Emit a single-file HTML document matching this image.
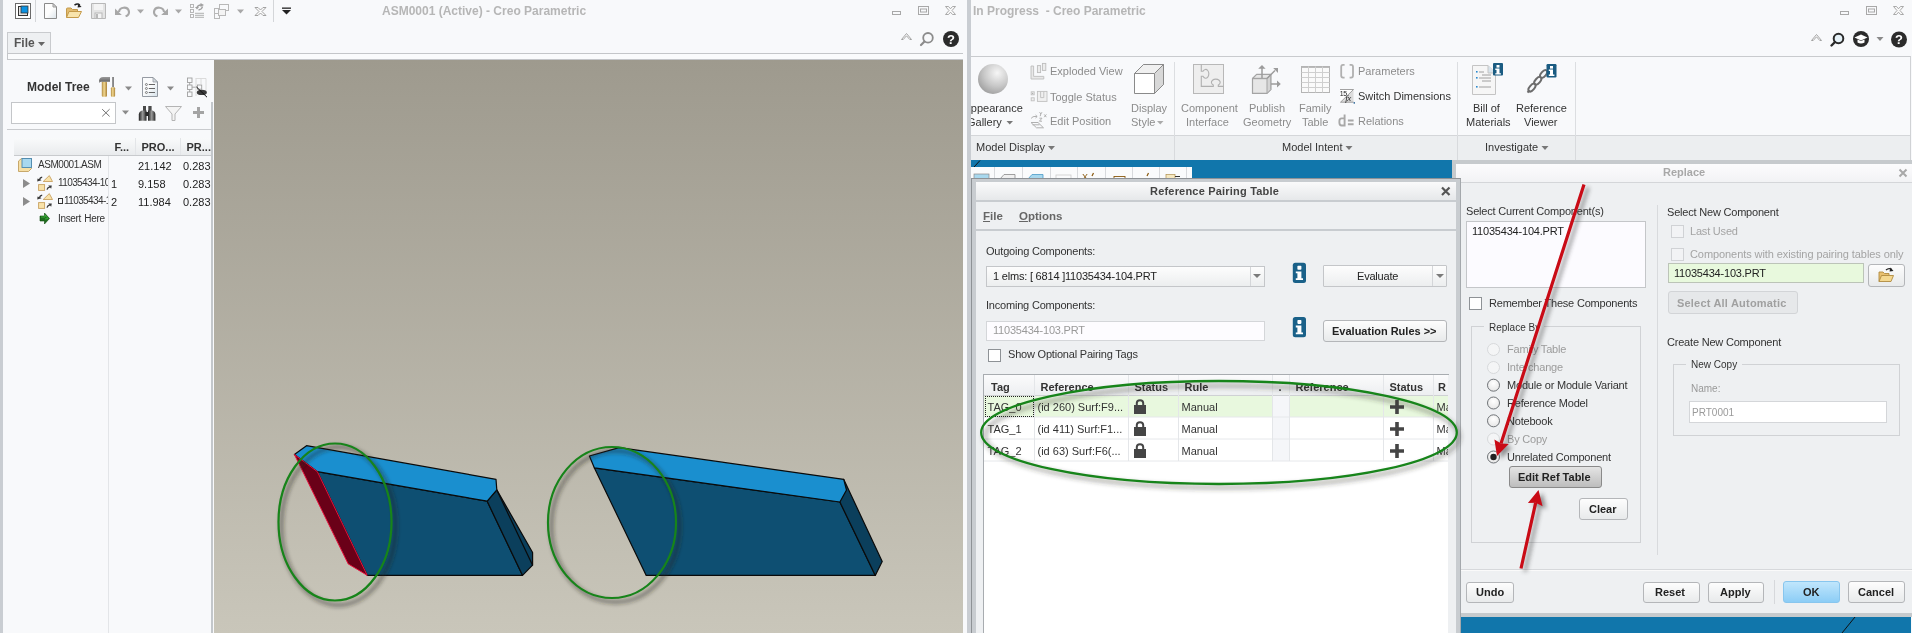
<!DOCTYPE html>
<html><head><meta charset="utf-8">
<style>
*{margin:0;padding:0;box-sizing:border-box}
html,body{width:1912px;height:633px;overflow:hidden;background:#f8f9fb;font-family:"Liberation Sans",sans-serif;position:relative}
.a{position:absolute}
svg.a{will-change:transform}
.t{position:absolute;white-space:nowrap;line-height:1;will-change:transform}
</style></head><body>

<!-- LEFT WINDOW -->
<div class="a" style="left:0;top:0;width:3px;height:633px;background:#c9cdd2"></div>
<div class="a" style="left:3px;top:0;width:964px;height:633px;background:#f8f9fb"></div>


<svg class="a" style="left:0;top:0" width="967" height="60" viewBox="0 0 967 60">
 <!-- app icon -->
 <rect x="15.5" y="3.5" width="15" height="15" fill="#fff" stroke="#6a6a6a"/>
 <rect x="18.5" y="6.5" width="9" height="9" fill="#e4e4e4" stroke="#333"/>
 <rect x="21" y="6" width="7" height="7" fill="#0c92e2" stroke="#333" stroke-width="0.8"/>
 <line x1="35.5" y1="0" x2="35.5" y2="22" stroke="#d4d6d9"/>
 <!-- new -->
 <defs><linearGradient id="nd" x1="0" y1="0" x2="1" y2="1"><stop offset="0.5" stop-color="#fdfdfd"/><stop offset="1" stop-color="#dce4ea"/></linearGradient></defs>
 <path d="M44.5 3.5 H53 L56.5 7 V18.5 H44.5 Z" fill="url(#nd)" stroke="#8a8a8a"/>
 <path d="M53 3.5 V7 H56.5 Z" fill="#d8d8d8" stroke="#9a9a9a" stroke-linejoin="round"/>
 <!-- open -->
 <path d="M66.5 17.5 V9 Q66.5 8 67.5 8 H71 L72.5 9.5 H77.5 V11.5" fill="#e2bc70" stroke="#c49a4a"/>
 <path d="M66.5 17.5 L69 11.5 H81.5 L78.5 17.5 Z" fill="#f8e4ac" stroke="#c49a4a"/>
 <path d="M74.5 5.2 Q77.5 3 79.8 5" fill="none" stroke="#222" stroke-width="1.6"/>
 <path d="M78.2 3.6 L81.6 7 L77.6 7.4 Z" fill="#222"/>
 <!-- save -->
 <path d="M91.5 3.5 H105.5 V18.5 H91.5 Z" fill="#e4e4e4" stroke="#b8b8b8"/>
 <rect x="94" y="4" width="9" height="6" fill="#f4f4f4"/>
 <rect x="95" y="13" width="7" height="5.5" fill="#f4f4f4" stroke="#b8b8b8"/>
 <rect x="96" y="14" width="2" height="4" fill="#b8b8b8"/>
 <!-- undo -->
 <path d="M119 12 A5 4.4 0 1 1 125.6 16.3" fill="none" stroke="#a8a8a8" stroke-width="2.2"/>
 <path d="M115 8.4 V15 H121.8 Z" fill="#a8a8a8"/>
 <path d="M137 9.5 H144 L140.5 13.5 Z" fill="#a8a8a8"/>
 <!-- redo -->
 <path d="M164 12 A5 4.4 0 1 0 157.4 16.3" fill="none" stroke="#a8a8a8" stroke-width="2.2"/>
 <path d="M168 8.4 V15 H161.2 Z" fill="#a8a8a8"/>
 <path d="M175 9.5 H182 L178.5 13.5 Z" fill="#a8a8a8"/>
 <!-- regen -->
 <g fill="none" stroke="#b0b0b0" stroke-width="0.9">
  <rect x="190.5" y="4.5" width="3" height="3"/><rect x="190.5" y="9.5" width="3" height="3"/><rect x="190.5" y="14.5" width="3" height="3"/>
 </g>
 <path d="M195 13.3 H204 M195 15.3 H204 M195 17.3 H204" stroke="#a8a8a8" stroke-width="0.9"/>
 <path d="M197 8 Q197.5 5 201 5" fill="none" stroke="#a0a0a0" stroke-width="1.4"/>
 <path d="M202.5 6.5 Q202 9.5 198.5 10" fill="none" stroke="#a0a0a0" stroke-width="1.4"/>
 <path d="M200.5 3 L204 5 L200.5 7 Z M195 7 L199 7 L197 9.5 Z" fill="#a0a0a0"/>
 <!-- windows -->
 <g fill="none" stroke="#b8b8b8">
  <rect x="214.5" y="8.5" width="5" height="5"/><rect x="214.5" y="13.5" width="5" height="5"/>
  <rect x="219.5" y="4.5" width="9" height="6"/><rect x="218.5" y="9.5" width="7" height="6" fill="#f4f4f4"/>
 </g>
 <path d="M237 9.5 H244 L240.5 13.5 Z" fill="#a8a8a8"/>
 <!-- close -->
 <path d="M255 7.5 L258 7.5 L260.5 10 L263 7.5 L266 7.5 L262 11.5 L266 15.5 L263 15.5 L260.5 13 L258 15.5 L255 15.5 L259 11.5 Z" fill="#fafafa" stroke="#9a9a9a" stroke-width="0.9"/>
 <line x1="273.5" y1="0" x2="273.5" y2="22" stroke="#d4d6d9"/>
 <rect x="282" y="7.5" width="9" height="1.3" fill="#222"/>
 <path d="M282 10 H291 L286.5 14.5 Z" fill="#222"/>
 <!-- window controls -->
 <rect x="892.5" y="11.5" width="8" height="3" fill="none" stroke="#a8a8a8"/>
 <rect x="918.5" y="6.5" width="10" height="8" fill="none" stroke="#a8a8a8"/>
 <rect x="920.5" y="9" width="6" height="3" fill="none" stroke="#a8a8a8"/>
 <path d="M945.5 6.5 L948.5 6.5 L950.5 8.8 L952.5 6.5 L955.5 6.5 L952 10.5 L955.5 14.5 L952.5 14.5 L950.5 12.2 L948.5 14.5 L945.5 14.5 L949 10.5 Z" fill="#fafafa" stroke="#a0a0a0" stroke-width="0.9"/>
 <!-- ribbon right icons -->
 <path d="M901.5 39.5 L906.5 33.5 L911.5 39.5 L909.8 39.5 L906.5 35.8 L903.2 39.5 Z" fill="#fff" stroke="#9a9a9a" stroke-width="0.9"/>
 <circle cx="928" cy="37.8" r="4.8" fill="none" stroke="#8c8c8c" stroke-width="1.8"/>
 <line x1="924.5" y1="41.5" x2="921" y2="45" stroke="#8c8c8c" stroke-width="2.2" stroke-linecap="round"/>
 <circle cx="951" cy="39" r="8" fill="#2b2b2b"/>
 <text x="951" y="43.5" font-family="Liberation Sans" font-weight="bold" font-size="13" fill="#fff" text-anchor="middle">?</text>
</svg>

<!-- title -->
<div class="t" style="left:382px;top:5px;font-size:12px;font-weight:bold;color:#b6b6b6">ASM0001 (Active) - Creo Parametric</div>

<!-- file tab / collapsed ribbon -->
<div class="a" style="left:7px;top:32px;width:44px;height:22px;background:#eef0f2;border:1px solid #c9cbce;border-bottom:none"></div>
<div class="t" style="left:14px;top:37px;font-size:12px;font-weight:bold;color:#555">File</div>
<svg class="a" style="left:38px;top:42px" width="8" height="5"><path d="M0 0 H7 L3.5 4 Z" fill="#666"/></svg>
<div class="a" style="left:7px;top:53px;width:960px;height:7px;border:1px solid #c4c6c9;border-right:none;background:#fafbfc"></div>

<!-- model tree panel -->
<div class="a" style="left:108px;top:138px;width:1px;height:495px;background:#e3e5e8"></div>
<div class="a" style="left:211px;top:102px;width:2px;height:531px;background:#c3c7cb"></div>
<div class="t" style="left:27px;top:81px;font-size:12px;font-weight:bold;color:#333">Model Tree</div>

<svg class="a" style="left:0;top:60" width="214" height="180" viewBox="0 60 214 180">
 <!-- hammer/screwdriver -->
 <defs>
  <linearGradient id="wd" x1="0" y1="0" x2="1" y2="0"><stop offset="0" stop-color="#b08a40"/><stop offset="0.45" stop-color="#f2d890"/><stop offset="1" stop-color="#a88038"/></linearGradient>
  <linearGradient id="mt" x1="0" y1="0" x2="0" y2="1"><stop offset="0" stop-color="#9a9a9a"/><stop offset="1" stop-color="#5a5a5a"/></linearGradient>
 </defs>
 <rect x="101.8" y="81.5" width="5.2" height="15.2" rx="1" fill="url(#wd)"/>
 <path d="M99 80.5 Q99.5 77 103 77 H110 V81.8 H101 Q100 81.8 99.5 83 Z" fill="url(#mt)"/>
 <rect x="112.3" y="77" width="1.5" height="10.5" fill="#6a6a6a"/>
 <rect x="110.9" y="87.2" width="4.2" height="9.5" rx="1" fill="url(#wd)"/>
 <path d="M125 86.5 H132 L128.5 90.5 Z" fill="#8a8a8a"/>
 <!-- doc list -->
 <defs><linearGradient id="dl" x1="0" y1="0" x2="1" y2="1"><stop offset="0.5" stop-color="#fafbfc"/><stop offset="1" stop-color="#d6e2ea"/></linearGradient></defs>
 <path d="M142.5 77.5 H153 L157.5 82 V96.5 H142.5 Z" fill="url(#dl)" stroke="#8a9098" stroke-width="0.9"/>
 <path d="M153 77.5 V82 H157.5 Z" fill="#d8dde2" stroke="#8a9098" stroke-width="0.7"/>
 <g fill="none" stroke="#555" stroke-width="0.7"><circle cx="146.4" cy="84.5" r="1"/><circle cx="146.4" cy="88.5" r="1"/><circle cx="146.4" cy="92.5" r="1"/></g>
 <path d="M148.8 84.5 H155 M148.8 88.5 H155 M148.8 92.5 H155" stroke="#555" stroke-width="0.9"/>
 <path d="M167 86.5 H174 L170.5 90.5 Z" fill="#8a8a8a"/>
 <!-- tree show icon -->
 <g fill="none" stroke="#a0a0a0" stroke-width="0.9">
  <rect x="187.5" y="78" width="4.5" height="4.5"/><rect x="187.5" y="85" width="4.5" height="4.5"/><rect x="187.5" y="92" width="4.5" height="4.5"/>
  <path d="M189.7 82.5 V85 M189.7 89.5 V92 M192 87.2 H197.5"/><rect x="197.5" y="85" width="4.2" height="4.2"/>
 </g>
 <path d="M195.5 78.5 H206 M196 78.5 V96 M201 78.5 V85 M206 78.5 V92" stroke="#d8d8d8" stroke-width="0.9" fill="none"/>
 <ellipse cx="201.8" cy="92.4" rx="5" ry="2.7" fill="#3a3a3a"/>
 <line x1="196.5" y1="87" x2="207" y2="97.2" stroke="#111" stroke-width="1"/>
 <!-- search box -->
 <rect x="11.5" y="102.5" width="104" height="21" fill="#fff" stroke="#c4c6c9"/>
 <path d="M102.2 109.2 L109.6 116.4 M109.6 109.2 L102.2 116.4" stroke="#707070" stroke-width="1"/>
 <path d="M122 110.5 H129 L125.5 114.5 Z" fill="#8a8a8a"/>
 <!-- binoculars -->
 <defs><linearGradient id="bn" x1="0" y1="0" x2="1" y2="0"><stop offset="0" stop-color="#1e1e1e"/><stop offset="0.5" stop-color="#9a9a9a"/><stop offset="1" stop-color="#262626"/></linearGradient></defs>
 <rect x="143" y="106" width="3" height="5" fill="#4a4a4a"/><rect x="148.3" y="106" width="3.3" height="5" fill="#4a4a4a"/>
 <path d="M142 110.5 H146.5 V120.7 H138.8 V114.5 Q139 111.5 142 110.5 Z" fill="url(#bn)"/>
 <path d="M148 110.5 H152.5 Q155.4 111.5 155.4 114.5 V120.7 H148 Z" fill="url(#bn)"/>
 <rect x="145.5" y="112" width="3" height="4" fill="#2a2a2a"/>
 <!-- funnel -->
 <path d="M165.5 106.5 H181.5 L175 114 V120.5 H172 V114 Z" fill="#f4f4f4" stroke="#b4b4b4"/>
 <!-- plus -->
 <path d="M197 107 H200 V111 H204 V114 H200 V118 H197 V114 H193 V111 H197 Z" fill="#a4a4a4"/>
 <line x1="7" y1="129.5" x2="211" y2="129.5" stroke="#c9cbce"/>
 <!-- header -->
 <defs><linearGradient id="hg" x1="0" y1="0" x2="0" y2="1"><stop offset="0" stop-color="#f9fafb"/><stop offset="1" stop-color="#e9ebed"/></linearGradient></defs>
 <rect x="14" y="138" width="197" height="17" fill="url(#hg)"/>
 <line x1="14" y1="155.5" x2="211" y2="155.5" stroke="#c8cacd"/>
 <path d="M135.5 138 V155 M180.5 138 V155" stroke="#e3e5e8"/>
 <text x="114.5" y="151" font-family="Liberation Sans" font-weight="bold" font-size="11" fill="#333">F...</text>
 <text x="141.5" y="151" font-family="Liberation Sans" font-weight="bold" font-size="11" fill="#333">PRO...</text>
 <text x="186.5" y="151" font-family="Liberation Sans" font-weight="bold" font-size="11" fill="#333">PR...</text>
 <!-- row1 icon -->
 <path d="M18.5 161 L21.5 158.5 H31.5 V168.5 L28.5 171.5 H18.5 Z" fill="#f6dfa6" stroke="#c2a060" stroke-width="0.9"/>
 <rect x="22" y="158.5" width="9.5" height="9" fill="#a8d8f0" stroke="#4a88b0" stroke-width="0.9"/>
 <!-- row2 -->
 <path d="M23 179 L30 183.5 L23 188 Z" fill="#8c8c8c"/>
 <path d="M23 197 L30 201.5 L23 206 Z" fill="#8c8c8c"/>
 <g id="pi">
  <path d="M43.2 181.5 L49.3 175.6 L52.5 181.5 Z" fill="#f8e2aa" stroke="#c8a262" stroke-width="0.9" stroke-linejoin="round"/>
  <rect x="38.6" y="184.6" width="6" height="5.8" fill="#f8e2aa" stroke="#c8a262" stroke-width="0.9"/>
  <path d="M42.2 177.2 Q39.8 177.6 39.6 180" fill="none" stroke="#3a3a3a" stroke-width="1.3"/>
  <path d="M37.2 181.6 L37.6 178.4 L41.6 180.2 Z" fill="#3a3a3a"/>
  <path d="M47 189.6 Q47.6 187.2 50 186.8" fill="none" stroke="#3a3a3a" stroke-width="1.3"/>
  <path d="M51.8 185.6 L48.2 185.4 L51.2 188.8 Z" fill="#3a3a3a"/>
 </g>
 <use href="#pi" y="18"/>
 <!-- insert here arrow -->
 <path d="M40 216 H44.5 V213 L49.5 218.5 L44.5 224 V221 H40 Z" fill="#1e6e1e" stroke="#0e4a0e" stroke-width="0.6"/>
 <path d="M41 217 H45 V215 L48 218.5 L45 219" fill="none" stroke="#3cbc3c" stroke-width="0.8"/>
</svg>
<div class="t" style="left:38px;top:160px;font-size:10px;color:#333;letter-spacing:-0.45px">ASM0001.ASM</div>
<div class="t" style="left:137.5px;top:161px;font-size:11px;color:#222">21.142</div>
<div class="t" style="left:182.5px;top:161px;font-size:11px;color:#222">0.283</div>
<div class="t" style="left:58px;top:178px;font-size:10px;color:#333;letter-spacing:-0.6px;width:50px;overflow:hidden">11035434-104.PRT</div>
<div class="t" style="left:110.5px;top:179px;font-size:11px;color:#222">1</div>
<div class="t" style="left:137.5px;top:179px;font-size:11px;color:#222">9.158</div>
<div class="t" style="left:182.5px;top:179px;font-size:11px;color:#222">0.283</div>
<div class="a" style="left:58px;top:197.5px;width:4.5px;height:6px;border:1.2px solid #333"></div>
<div class="t" style="left:64px;top:196px;font-size:10px;color:#333;letter-spacing:-0.6px;width:44px;overflow:hidden">11035434-103</div>
<div class="t" style="left:110.5px;top:197px;font-size:11px;color:#222">2</div>
<div class="t" style="left:137.5px;top:197px;font-size:11px;color:#222">11.984</div>
<div class="t" style="left:182.5px;top:197px;font-size:11px;color:#222">0.283</div>
<div class="t" style="left:58px;top:214px;font-size:10px;color:#333;letter-spacing:-0.35px;word-spacing:1px">Insert Here</div>


<!-- viewport -->
<div class="a" style="left:214px;top:60px;width:749px;height:573px;background:linear-gradient(#9e9a8e,#c9c6ba)"></div>


<svg class="a" style="left:214px;top:60px" width="749" height="573" viewBox="214 60 749 573">
 <defs>
  <filter id="sh" x="-20%" y="-20%" width="140%" height="140%"><feGaussianBlur stdDeviation="2.2"/></filter>
 </defs>
 <!-- shape 1 -->
 <g stroke="#0a0a0a" stroke-width="1.2" stroke-linejoin="round">
  <path d="M317.4 471.7 L487.2 501.2 L522.5 575.3 L367.2 575.3 Z" fill="#0e4f72"/>
  <path d="M487.2 501.2 L496.8 489.9 L532.6 552.5 L532.6 565.2 L522.5 575.3 Z" fill="#0b3f5c"/>
  <path d="M496.8 489.9 L532.6 565.2" fill="none"/>
  <path d="M306.5 445.7 L496 479.3 L496.8 489.9 L487.2 501.2 L317.4 471.7 L294.4 454.5 Z" fill="#1a8fcf"/>
 </g>
 <path d="M294.4 454.5 L317.4 471.7 L367.2 575.3 L348.2 563.9 Z" fill="#6a0018" stroke="#e8103c" stroke-width="1"/>
 <!-- shape 2 -->
 <g stroke="#0a0a0a" stroke-width="1.2" stroke-linejoin="round">
  <path d="M594.4 467.9 L839.9 502 L875.3 575.4 L646.2 575.4 Z" fill="#0e4f72"/>
  <path d="M839.9 502 L843.7 479.3 L882.2 561.5 L875.3 575.4 Z" fill="#0b3f5c"/>
  <path d="M589.4 456 L619.2 447.7 L843.7 479.3 L846.5 490 L839.9 502 L594.4 467.9 Z" fill="#1a8fcf"/>
 </g>
 <!-- ellipses with shadows -->
 <g fill="none" stroke-width="2.2">
  <ellipse cx="338.5" cy="526" rx="57" ry="79" stroke="rgba(40,38,30,0.6)" stroke-width="3" filter="url(#sh)"/>
  <ellipse cx="615.5" cy="526.5" rx="64" ry="75.5" stroke="rgba(40,38,30,0.6)" stroke-width="3" filter="url(#sh)"/>
  <ellipse cx="335" cy="522" rx="56.5" ry="78.5" stroke="#17841a"/>
  <ellipse cx="612" cy="522.5" rx="64" ry="75.5" stroke="#17841a"/>
 </g>
</svg>

<!-- window separator -->
<div class="a" style="left:963px;top:0;width:4px;height:633px;background:#f8f9fb"></div>
<div class="a" style="left:967px;top:0;width:4px;height:633px;background:#c9cdd2"></div>

<!-- RIGHT WINDOW -->
<div class="a" style="left:971px;top:0;width:941px;height:633px;background:#f8f9fb"></div>
<div class="t" style="left:973px;top:5px;font-size:12px;font-weight:bold;color:#b6b6b6">In Progress&nbsp; - Creo Parametric</div>


<!-- right window top icons -->
<svg class="a" style="left:1800px;top:0" width="112" height="56" viewBox="1800 0 112 56">
 <rect x="1840.5" y="11.5" width="8" height="3" fill="none" stroke="#a8a8a8"/>
 <rect x="1866.5" y="6.5" width="10" height="8" fill="none" stroke="#a8a8a8"/>
 <rect x="1868.5" y="9" width="6" height="3" fill="none" stroke="#a8a8a8"/>
 <path d="M1893.5 6.5 L1896.5 6.5 L1898.5 8.8 L1900.5 6.5 L1903.5 6.5 L1900 10.5 L1903.5 14.5 L1900.5 14.5 L1898.5 12.2 L1896.5 14.5 L1893.5 14.5 L1897 10.5 Z" fill="#fafafa" stroke="#a0a0a0" stroke-width="0.9"/>
 <path d="M1811.5 40.5 L1816.5 34.5 L1821.5 40.5 L1819.8 40.5 L1816.5 36.8 L1813.2 40.5 Z" fill="#fff" stroke="#9a9a9a" stroke-width="0.9"/>
 <circle cx="1838.5" cy="38.5" r="4.8" fill="#e6f2f8" stroke="#2a2a2a" stroke-width="2"/>
 <line x1="1835" y1="42" x2="1831.5" y2="45.5" stroke="#2a2a2a" stroke-width="2.4" stroke-linecap="round"/>
 <circle cx="1861" cy="39" r="8" fill="#2b2b2b"/>
 <path d="M1854.5 37.5 L1861 34.5 L1867.5 37.5 L1861 40.5 Z" fill="#fff"/>
 <path d="M1857.5 39.5 V42.5 Q1861 44.5 1864.5 42.5 V39.5 L1861 41 Z" fill="#fff"/>
 <path d="M1876.5 37 H1883.5 L1880 41 Z" fill="#8a8a8a"/>
 <circle cx="1899" cy="39.5" r="8" fill="#2b2b2b"/>
 <text x="1899" y="44" font-family="Liberation Sans" font-weight="bold" font-size="13" fill="#fff" text-anchor="middle">?</text>
</svg>

<!-- ribbon -->
<div class="a" style="left:971px;top:56px;width:940px;height:105px;border-top:1px solid #c9cbce;border-right:1px solid #d0d2d5;background:#f8f9fb"></div>
<div class="a" style="left:971px;top:135px;width:939px;height:25px;background:#eceef0;border-top:1px solid #d4d6d9"></div>
<div class="a" style="left:1174px;top:62px;width:1px;height:98px;background:#dcdee1"></div>
<div class="a" style="left:1457px;top:62px;width:1px;height:98px;background:#dcdee1"></div>
<div class="a" style="left:1575px;top:62px;width:1px;height:98px;background:#dcdee1"></div>

<svg class="a" style="left:971px;top:56px" width="940" height="104" viewBox="971 56 940 104">
 <defs>
  <radialGradient id="sph" cx="0.64" cy="0.3" r="0.8"><stop offset="0" stop-color="#f6f6f6"/><stop offset="0.55" stop-color="#c8c8c8"/><stop offset="1" stop-color="#9a9a9a"/></radialGradient>
 </defs>
 <circle cx="993" cy="79" r="15" fill="url(#sph)"/>
 <path d="M1006.5 121 H1013 L1009.75 124.5 Z" fill="#777"/>
 <!-- exploded view icon -->
 <path d="M1031 66 V79 H1043.8 V76.4 H1033.6 V66 Z" fill="#e8e8e8" stroke="#bdbdbd" stroke-width="0.9"/>
 <rect x="1037.4" y="65.6" width="3.2" height="7" fill="#ececec" stroke="#bdbdbd" stroke-width="0.9"/>
 <rect x="1042.4" y="63.4" width="3.4" height="7" fill="#ececec" stroke="#bdbdbd" stroke-width="0.9"/>
 <!-- toggle status -->
 <g fill="#f0f0f0" stroke="#c0c0c0" stroke-width="0.9">
  <rect x="1031.2" y="91.8" width="3" height="3"/><rect x="1031.2" y="97.8" width="3" height="3"/>
  <rect x="1037.4" y="91.4" width="9.6" height="10"/>
 </g>
 <path d="M1040.6 91.6 V97.6 H1043.8 V91.6" fill="none" stroke="#c0c0c0" stroke-width="0.9"/>
 <circle cx="1032.7" cy="93.3" r="0.6" fill="#999"/>
 <!-- edit position -->
 <g fill="none" stroke="#b0b0b0" stroke-width="1">
  <path d="M1031.5 118.5 Q1032 116.5 1034 116.5 H1037 M1035.5 115 L1037.2 116.5 L1035.5 118"/>
  <path d="M1031 122.5 H1038 L1043.5 127.8 H1036.5 Z M1032.5 124.8 H1039.5"/>
  <path d="M1039.6 112.2 L1040.8 114 L1042 112.2 M1040.8 114 L1040.2 116.2"/>
  <path d="M1044.2 114.4 L1046.4 117.2 M1046.4 114.4 L1044.2 117.2"/>
  <path d="M1039.4 118.2 H1042 L1039.4 121.2 H1042"/>
 </g>
 <!-- display style cube -->
 <path d="M1134.5 73.5 L1143.5 64.5 H1163.5 V84.5 L1154.5 93.5 H1134.5 Z" fill="#fff" stroke="#8a8a8a"/>
 <path d="M1134.5 73.5 L1143.5 64.5 H1163.5 L1154.5 73.5 Z" fill="#f0f0f0" stroke="#8a8a8a"/>
 <path d="M1154.5 73.5 L1163.5 64.5 V84.5 L1154.5 93.5 Z" fill="#d8d8d8" stroke="#8a8a8a"/>
 <path d="M1157 121 H1163.5 L1160.25 124.5 Z" fill="#aaa"/>
 <!-- component interface puzzle -->
 <rect x="1193.5" y="64.5" width="30" height="29" fill="#eeeeee" stroke="#b8b8b8" stroke-width="1"/>
 <path d="M1201.3 64.5 V71.3 H1203 A3.2 4.4 0 1 1 1203 76.3 H1201.3 V86.4 H1213.3 V85 A4.4 3.2 0 1 1 1218.3 85 V86.4 H1223.5" fill="none" stroke="#b0b0b0" stroke-width="1.1"/>
 <!-- publish geometry -->
 <path d="M1252.5 78.5 L1256.6 74.4 H1270.8 V89.6 L1267 93.4 H1252.5 Z" fill="#e6e6e6" stroke="#a4a4a4" stroke-width="1.2" stroke-linejoin="round"/>
 <path d="M1267 78.5 L1270.8 74.4 V89.6 L1267 93.4 Z" fill="#d4d4d4" stroke="#a4a4a4" stroke-width="1"/>
 <path d="M1252.5 78.5 H1267" stroke="#a4a4a4" stroke-width="1.4"/>
 <g stroke="#9c9c9c" stroke-width="1.5" fill="none"><path d="M1262 78 V68 M1267 78.5 L1275 70.5 M1271 84 H1277.5"/></g>
 <path d="M1258.2 68.8 L1262 65 L1265.6 68.8 Z M1273.2 68 L1278 68 L1278 73 Z M1277 80.4 L1280.8 84 L1277 87.6 Z" fill="#9c9c9c"/>
 <!-- family table -->
 <rect x="1301.5" y="66.5" width="28" height="26" fill="#fafafa" stroke="#b4b4b4"/>
 <path d="M1301.5 67.2 H1329.5" stroke="#b4b4b4" stroke-width="1.4"/>
 <path d="M1301.5 72.5 H1329.5 M1301.5 77.5 H1329.5 M1301.5 82.5 H1329.5 M1301.5 87.5 H1329.5 M1308.5 66.5 V92.5 M1315.5 66.5 V92.5 M1322.5 66.5 V92.5" stroke="#cfcfcf"/>
 <!-- parameters -->
 <path d="M1344.6 64.8 H1343 Q1341.2 64.8 1341.2 66.8 V75.6 Q1341.2 77.6 1343 77.6 H1344.6 M1349.6 64.8 H1351.2 Q1353 64.8 1353 66.8 V75.6 Q1353 77.6 1351.2 77.6 H1349.6" fill="none" stroke="#b0b0b0" stroke-width="1.8"/>
 <!-- switch dimensions -->
 <path d="M1340 89.5 H1353.5 L1340.5 102 Z" fill="#fff"/>
 <path d="M1353.5 89.5 V102.2 H1340.5 Z" fill="#dcdcdc"/>
 <path d="M1340 89.5 H1353.5 L1340.5 102.2 H1353.5" fill="none" stroke="#8a8a8a" stroke-width="0.8"/>
 <text x="1339.8" y="96" font-family="Liberation Sans" font-size="7" fill="#222" letter-spacing="-0.5">15</text>
 <text x="1345.2" y="101.2" font-family="Liberation Serif" font-style="italic" font-size="9" fill="#222" letter-spacing="-0.5">fx</text>
 <rect x="1353.6" y="102.2" width="1.4" height="1.4" fill="#1a5a90"/>
 <!-- relations -->
 <path d="M1344.6 114.4 V125.5 H1341.6 Q1339.4 125.5 1339.4 122.8 V121 Q1339.4 118.4 1341.6 118.4 H1344.6" fill="none" stroke="#a8a8a8" stroke-width="1.9"/>
 <path d="M1347.9 120.5 H1353.6 M1347.9 124.2 H1353.6" stroke="#a8a8a8" stroke-width="1.9"/>
 <!-- BOM -->
 <path d="M1472.5 65.5 H1488 L1495.5 73 V94.5 H1472.5 Z" fill="#f6f6f6" stroke="#c4c4c4"/>
 <path d="M1488 65.5 V73 H1495.5" fill="#d8e4ec" stroke="#c4c4c4"/>
 <rect x="1476" y="71" width="1.6" height="1.6" fill="#2a8ad0"/><rect x="1476" y="77" width="1.6" height="1.6" fill="#2a8ad0"/><rect x="1476" y="86" width="1.6" height="1.6" fill="#2a8ad0"/>
 <path d="M1479 72 H1484 M1482 75 H1491 M1479 78 H1491 M1482 81 H1491 M1479 87 H1491" stroke="#8a8a8a" stroke-width="0.8"/>
 <rect x="1493" y="63" width="10" height="12.5" rx="1" fill="#1b5c82"/>
 <rect x="1496.5" y="65" width="3" height="2.6" fill="#fff"/><path d="M1495.3 68.6 H1499.5 V73.2 H1500.9 V74.6 H1495.3 V73.2 H1496.5 V69.9 H1495.3 Z" fill="#fff"/>
 <!-- chain -->
 <g fill="none" stroke="#6c6c6c" stroke-width="2">
  <path d="M1527.5 92.5 L1529.5 90.5"/>
  <ellipse cx="1532" cy="87.6" rx="4.6" ry="2.4" transform="rotate(-50 1532 87.6)"/>
  <ellipse cx="1537.8" cy="80.8" rx="4.6" ry="2.4" transform="rotate(-50 1537.8 80.8)"/>
  <ellipse cx="1543.6" cy="74" rx="4.6" ry="2.4" transform="rotate(-50 1543.6 74)"/>
 </g>
 <rect x="1546.5" y="64" width="10" height="13.5" rx="1.2" fill="#1b5c82"/>
 <rect x="1550" y="66" width="3" height="2.6" fill="#fff"/><path d="M1548.8 69.6 H1553 V74.6 H1554.4 V76 H1548.8 V74.6 H1550 V70.9 H1548.8 Z" fill="#fff"/>
 <!-- label dropdowns -->
 <path d="M1048 146 H1055 L1051.5 150 Z" fill="#777"/>
 <path d="M1345.5 146 H1352.5 L1349 150 Z" fill="#777"/>
 <path d="M1541.5 146 H1548.5 L1545 150 Z" fill="#777"/>
</svg>
<div class="a" style="left:1174px;top:136px;width:1px;height:24px;background:#d8dadd"></div>
<div class="a" style="left:1457px;top:136px;width:1px;height:24px;background:#d8dadd"></div>
<div class="a" style="left:1575px;top:136px;width:1px;height:24px;background:#d8dadd"></div>

<div class="t" style="left:971px;top:103px;width:60px;overflow:hidden;font-size:11px;color:#333"><span style="margin-left:-7.5px">Appearance</span></div>
<div class="t" style="left:971px;top:117px;width:60px;overflow:hidden;font-size:11px;color:#333"><span style="margin-left:-4px">Gallery</span></div>
<div class="t" style="left:1050px;top:66px;font-size:11px;color:#8c8c8c">Exploded View</div>
<div class="t" style="left:1050px;top:92px;font-size:11px;color:#8c8c8c">Toggle Status</div>
<div class="t" style="left:1050px;top:116px;font-size:11px;color:#8c8c8c">Edit Position</div>
<div class="t" style="left:1131px;top:103px;font-size:11px;color:#8c8c8c">Display</div>
<div class="t" style="left:1131px;top:117px;font-size:11px;color:#8c8c8c">Style</div>
<div class="t" style="left:1181px;top:103px;font-size:11px;color:#8c8c8c">Component</div>
<div class="t" style="left:1186px;top:117px;font-size:11px;color:#8c8c8c">Interface</div>
<div class="t" style="left:1249px;top:103px;font-size:11px;color:#8c8c8c">Publish</div>
<div class="t" style="left:1243px;top:117px;font-size:11px;color:#8c8c8c">Geometry</div>
<div class="t" style="left:1299px;top:103px;font-size:11px;color:#8c8c8c">Family</div>
<div class="t" style="left:1302px;top:117px;font-size:11px;color:#8c8c8c">Table</div>
<div class="t" style="left:1358px;top:66px;font-size:11px;color:#8c8c8c">Parameters</div>
<div class="t" style="left:1358px;top:91px;font-size:11px;color:#333">Switch Dimensions</div>
<div class="t" style="left:1358px;top:116px;font-size:11px;color:#8c8c8c">Relations</div>
<div class="t" style="left:1473px;top:103px;font-size:11px;color:#333">Bill of</div>
<div class="t" style="left:1466px;top:117px;font-size:11px;color:#333">Materials</div>
<div class="t" style="left:1516px;top:103px;font-size:11px;color:#333">Reference</div>
<div class="t" style="left:1524px;top:117px;font-size:11px;color:#333">Viewer</div>
<div class="t" style="left:976px;top:142px;font-size:11px;color:#333">Model Display</div>
<div class="t" style="left:1282px;top:142px;font-size:11px;color:#333">Model Intent</div>
<div class="t" style="left:1485px;top:142px;font-size:11px;color:#333">Investigate</div>

<!-- blue band -->
<div class="a" style="left:971px;top:160px;width:940px;height:473px;background:#1176ab"></div>
<div class="a" style="left:1911px;top:160px;width:1px;height:473px;background:#f8f9fb"></div>
<svg class="a" style="left:971px;top:160px" width="230" height="20" viewBox="971 160 230 20">
 <line x1="974" y1="167" x2="980" y2="160.5" stroke="#111" stroke-width="1"/>
 <rect x="971" y="167" width="221" height="12" fill="#fafbfc"/>
 <path d="M994.5 167 V179 M1022.5 167 V179 M1050.5 167 V179 M1077.5 167 V179 M1105.5 167 V179 M1132.5 167 V179 M1159.5 167 V179 M1186.5 167 V179" stroke="#d8dadd"/>
 <rect x="974" y="174" width="15" height="6" fill="#a8d8ee" stroke="#8a8a8a" stroke-width="0.7"/>
 <path d="M1000 179 L1004 174.5 H1015 V179" fill="#f0f0f0" stroke="#8a8a8a" stroke-width="0.8"/>
 <path d="M1028 179 L1032 174.5 H1043 V179" fill="#a8d8ee" stroke="#4a9ac8" stroke-width="0.8"/>
 <rect x="1056" y="175" width="15" height="5" fill="none" stroke="#ccc" stroke-width="0.8"/>
 <text x="1082" y="180" font-family="Liberation Sans" font-size="9" fill="#8a5a10">X</text>
 <path d="M1092 176 L1093.5 173" stroke="#8a5a10" stroke-width="1.2"/>
 <rect x="1114" y="176.5" width="11" height="4" fill="none" stroke="#8a5a10" stroke-width="0.9"/>
 <path d="M1147 176 L1148.5 173" stroke="#8a5a10" stroke-width="1.2"/>
 <rect x="1166" y="174.5" width="9" height="6" fill="#f6e8c0" stroke="#b09050" stroke-width="0.7"/><path d="M1175 176.5 H1180" stroke="#333" stroke-width="1"/>
</svg>


<!-- Replace dialog frame -->
<div class="a" style="left:1452px;top:160px;width:460px;height:457px;background:#c6cacd"></div>
<div class="a" style="left:1456px;top:164px;width:456px;height:449px;background:#eef0f2"></div>
<div class="a" style="left:1456px;top:164px;width:456px;height:19px;background:linear-gradient(#fcfcfd,#f2f3f5);border-bottom:1px solid #d4d6d9"></div>
<div class="t" style="left:1663px;top:167px;font-size:11px;font-weight:bold;color:#a8a8a8">Replace</div>
<svg class="a" style="left:1898px;top:168px" width="11" height="10"><path d="M1.5 1.5 L8.5 8.5 M8.5 1.5 L1.5 8.5" stroke="#a8a8a8" stroke-width="2"/></svg>


<!-- Replace dialog content -->
<div class="t" style="left:1465.5px;top:206px;font-size:11px;color:#333;letter-spacing:-0.2px">Select Current Component(s)</div>
<div class="a" style="left:1466px;top:221px;width:180px;height:67px;background:#fcfbff;border:1px solid #c4c6c9"></div>
<div class="t" style="left:1472px;top:226px;font-size:11px;color:#222;letter-spacing:-0.2px">11035434-104.PRT</div>
<div class="a" style="left:1469px;top:297px;width:13px;height:13px;background:#fff;border:1px solid #8e9296"></div>
<div class="t" style="left:1488.5px;top:298px;font-size:11px;color:#333;letter-spacing:-0.2px">Remember These Components</div>

<div class="a" style="left:1471px;top:326px;width:170px;height:217px;border:1px solid #d0d2d5"></div>
<div class="a" style="left:1484px;top:320px;width:60px;height:10px;background:#eef0f2"></div>
<div class="t" style="left:1489px;top:323px;font-size:10px;color:#333">Replace By</div>

<svg class="a" style="left:1485px;top:340px" width="20" height="126" viewBox="1485 340 20 126">
 <defs><radialGradient id="rg" cx="0.5" cy="0.35" r="0.6"><stop offset="0" stop-color="#fff"/><stop offset="1" stop-color="#e8e8e8"/></radialGradient></defs>
 <g fill="#f4f5f6" stroke="#d6d8da" stroke-width="1"><circle cx="1493.5" cy="349.5" r="6"/><circle cx="1493.5" cy="367.5" r="6"/><circle cx="1493.5" cy="439" r="6"/></g>
 <g fill="url(#rg)" stroke="#6e7276" stroke-width="1"><circle cx="1493.5" cy="385.2" r="6"/><circle cx="1493.5" cy="403" r="6"/><circle cx="1493.5" cy="420.8" r="6"/><circle cx="1493.5" cy="457" r="6"/></g>
 <circle cx="1493.5" cy="457" r="3.2" fill="#222"/>
</svg>
<div class="t" style="left:1506.5px;top:344px;font-size:11px;color:#9c9c9c;letter-spacing:-0.2px">Family Table</div>
<div class="t" style="left:1506.5px;top:362px;font-size:11px;color:#9c9c9c;letter-spacing:-0.2px">Interchange</div>
<div class="t" style="left:1506.5px;top:380px;font-size:11px;color:#333;letter-spacing:-0.2px">Module or Module Variant</div>
<div class="t" style="left:1506.5px;top:398px;font-size:11px;color:#333;letter-spacing:-0.2px">Reference Model</div>
<div class="t" style="left:1506.5px;top:416px;font-size:11px;color:#333;letter-spacing:-0.2px">Notebook</div>
<div class="t" style="left:1506.5px;top:434px;font-size:11px;color:#9c9c9c;letter-spacing:-0.2px">By Copy</div>
<div class="t" style="left:1506.5px;top:452px;font-size:11px;color:#333;letter-spacing:-0.2px">Unrelated Component</div>

<div class="a" style="left:1509px;top:466px;width:93px;height:22px;background:linear-gradient(#e4e4e4,#bdbdbd);border:1px solid #8a8a8a;border-radius:3px"></div>
<div class="t" style="left:1518px;top:472px;font-size:11px;font-weight:bold;color:#222">Edit Ref Table</div>
<div class="a" style="left:1579px;top:498px;width:49px;height:22px;background:linear-gradient(#fdfdfd,#e8eaeb);border:1px solid #b4b6b9;border-radius:3px"></div>
<div class="t" style="left:1589px;top:504px;font-size:11px;font-weight:bold;color:#222">Clear</div>

<div class="a" style="left:1657px;top:205px;width:1px;height:350px;background:#d8dadd"></div>

<div class="t" style="left:1667px;top:207px;font-size:11px;color:#333;letter-spacing:-0.2px">Select New Component</div>
<div class="a" style="left:1671px;top:225px;width:13px;height:13px;background:#f2f3f5;border:1px solid #d0d2d5"></div>
<div class="t" style="left:1690px;top:226px;font-size:11px;color:#a4a4a4;letter-spacing:-0.2px">Last Used</div>
<div class="a" style="left:1671px;top:248px;width:13px;height:13px;background:#f2f3f5;border:1px solid #d0d2d5"></div>
<div class="t" style="left:1690px;top:249px;font-size:11px;color:#a4a4a4;letter-spacing:-0.08px">Components with existing pairing tables only</div>
<div class="a" style="left:1668px;top:263px;width:196px;height:20px;background:#e8f9dd;border:1px solid #bcc4b8"></div>
<div class="t" style="left:1673.5px;top:268px;font-size:11px;color:#222;letter-spacing:-0.2px">11035434-103.PRT</div>
<div class="a" style="left:1868px;top:264px;width:37px;height:23px;background:linear-gradient(#fdfdfd,#e8eaeb);border:1px solid #b4b6b9;border-radius:3px"></div>
<svg class="a" style="left:1876px;top:266px" width="22" height="18" viewBox="0 0 22 18">
 <path d="M3 15.5 V6 H7 L8.5 7.5 H13 V9" fill="#e8c070" stroke="#b08a40" stroke-width="0.9"/>
 <path d="M3 15.5 L5.5 9.5 H17.5 L15 15.5 Z" fill="#f4d890" stroke="#b08a40" stroke-width="0.9"/>
 <path d="M10 4 Q13 1.5 15.5 3.5" fill="none" stroke="#222" stroke-width="1.4"/>
 <path d="M14.5 1.5 L17.5 5 L13.5 5.5 Z" fill="#222"/>
</svg>
<div class="a" style="left:1668px;top:291px;width:130px;height:23px;background:#e6e8ea;border:1px solid #d2d4d7;border-radius:3px"></div>
<div class="t" style="left:1677px;top:298px;font-size:11px;font-weight:bold;color:#a0a0a0;letter-spacing:0.2px">Select All Automatic</div>

<div class="t" style="left:1667px;top:337px;font-size:11px;color:#333;letter-spacing:-0.2px">Create New Component</div>
<div class="a" style="left:1673px;top:364px;width:227px;height:72px;border:1px solid #d0d2d5"></div>
<div class="a" style="left:1686px;top:358px;width:56px;height:10px;background:#eef0f2"></div>
<div class="t" style="left:1691px;top:360px;font-size:10px;color:#333">New Copy</div>
<div class="t" style="left:1690.5px;top:384px;font-size:10px;color:#999">Name:</div>
<div class="a" style="left:1689px;top:401px;width:198px;height:22px;background:#fff;border:1px solid #d4d6d9"></div>
<div class="t" style="left:1692px;top:408px;font-size:10px;color:#9a9a9a">PRT0001</div>

<div class="a" style="left:1457px;top:569px;width:455px;height:1px;background:#d6d8db"></div>
<div class="a" style="left:1457px;top:570px;width:455px;height:1px;background:#fafafa"></div>
<div class="a" style="left:1466px;top:582px;width:48px;height:21px;background:linear-gradient(#fdfdfd,#e8eaeb);border:1px solid #b4b6b9;border-radius:3px"></div>
<div class="t" style="left:1476px;top:587px;font-size:11px;font-weight:bold;color:#222">Undo</div>
<div class="a" style="left:1643px;top:582px;width:57px;height:21px;background:linear-gradient(#fdfdfd,#e8eaeb);border:1px solid #b4b6b9;border-radius:3px"></div>
<div class="t" style="left:1655px;top:587px;font-size:11px;font-weight:bold;color:#222">Reset</div>
<div class="a" style="left:1708px;top:582px;width:56px;height:21px;background:linear-gradient(#fdfdfd,#e8eaeb);border:1px solid #b4b6b9;border-radius:3px"></div>
<div class="t" style="left:1720px;top:587px;font-size:11px;font-weight:bold;color:#222">Apply</div>
<div class="a" style="left:1774px;top:580px;width:1px;height:24px;background:#d6d8db"></div>
<div class="a" style="left:1783px;top:581px;width:57px;height:22px;background:linear-gradient(#c0e6fc,#8ccdf6);border:1px solid #88c6ee;border-radius:3px"></div>
<div class="t" style="left:1803px;top:587px;font-size:11px;font-weight:bold;color:#222">OK</div>
<div class="a" style="left:1848px;top:581px;width:57px;height:22px;background:linear-gradient(#fdfdfd,#e8eaeb);border:1px solid #b4b6b9;border-radius:3px"></div>
<div class="t" style="left:1858px;top:587px;font-size:11px;font-weight:bold;color:#222">Cancel</div>
<svg class="a" style="left:1838px;top:617px" width="20" height="16"><line x1="17" y1="0" x2="4" y2="16" stroke="#111" stroke-width="1"/></svg>

<!-- RPT dialog frame -->
<div class="a" style="left:971px;top:178px;width:490px;height:455px;background:#c8ccd0;border-left:1px solid #8e9296;border-top:1px solid #8e9296;border-right:1px solid #a4a8ac"></div>
<div class="a" style="left:976px;top:182px;width:480px;height:451px;background:#eef0f2"></div>
<div class="a" style="left:976px;top:182px;width:480px;height:18px;background:linear-gradient(#fafafb,#e6e8ea)"></div>
<div class="a" style="left:976px;top:200px;width:480px;height:2px;background:#c8ccd0"></div>
<div class="a" style="left:976px;top:229px;width:480px;height:2px;background:#c8ccd0"></div>
<div class="t" style="left:1150px;top:186px;font-size:11px;font-weight:bold;color:#444;letter-spacing:0.2px">Reference Pairing Table</div>
<svg class="a" style="left:1440px;top:186px" width="12" height="11"><path d="M2 1.5 L9.5 9 M9.5 1.5 L2 9" stroke="#555" stroke-width="2.2"/></svg>
<div class="t" style="left:983px;top:210.5px;font-size:11.5px;font-weight:bold;color:#666"><u>F</u>ile</div>
<div class="t" style="left:1019px;top:210.5px;font-size:11.5px;font-weight:bold;color:#666"><u>O</u>ptions</div>

<div class="t" style="left:985.5px;top:246px;font-size:11px;color:#333;letter-spacing:-0.2px">Outgoing Components:</div>
<div class="a" style="left:986px;top:266px;width:279px;height:21px;background:linear-gradient(#fdfdfd,#eceeef);border:1px solid #c4c6c9"></div>
<div class="a" style="left:1250px;top:267px;width:1px;height:19px;background:#d4d6d9"></div>
<svg class="a" style="left:1252px;top:273px" width="10" height="6"><path d="M1 1 H9 L5 5 Z" fill="#7a7a7a"/></svg>
<div class="t" style="left:993px;top:271px;font-size:11px;color:#222;letter-spacing:-0.2px">1 elms: [ 6814 ]11035434-104.PRT</div>

<div class="t" style="left:985.5px;top:300px;font-size:11px;color:#333;letter-spacing:-0.2px">Incoming Components:</div>
<div class="a" style="left:986px;top:321px;width:279px;height:20px;background:#fdfcff;border:1px solid #d4d6d9"></div>
<div class="t" style="left:992.5px;top:325px;font-size:11px;color:#9a9a9a;letter-spacing:-0.2px">11035434-103.PRT</div>

<div class="a" style="left:988px;top:349px;width:13px;height:13px;background:#fff;border:1px solid #8e9296"></div>
<div class="t" style="left:1007.5px;top:349px;font-size:11px;color:#333;letter-spacing:-0.2px">Show Optional Pairing Tags</div>

<svg class="a" style="left:1292px;top:262px" width="15" height="80" viewBox="1292 262 15 80">
 <g id="inf">
 <rect x="1292.8" y="262.8" width="13.2" height="20.2" rx="2.5" fill="#1a6189"/>
 <rect x="1297.4" y="265.8" width="4" height="3.9" rx="0.8" fill="#fff"/>
 <path d="M1295.8 271.4 H1301.4 V278.2 H1303 V280 H1295.8 V278.2 H1297.4 V273.2 H1295.8 Z" fill="#fff"/>
 </g>
 <use href="#inf" y="54.2"/>
</svg>

<div class="a" style="left:1323px;top:265px;width:124px;height:22px;background:linear-gradient(#fdfdfd,#eceeef);border:1px solid #c4c6c9;border-radius:1px"></div>
<div class="a" style="left:1432px;top:266px;width:1px;height:20px;background:#d4d6d9"></div>
<svg class="a" style="left:1435px;top:273px" width="10" height="6"><path d="M1 1 H9 L5 5 Z" fill="#7a7a7a"/></svg>
<div class="t" style="left:1356.5px;top:271px;font-size:11px;color:#222;letter-spacing:-0.2px">Evaluate</div>

<div class="a" style="left:1323px;top:320px;width:124px;height:22px;background:linear-gradient(#fdfdfd,#e8eaeb);border:1px solid #b4b6b9;border-radius:3px"></div>
<div class="t" style="left:1332px;top:326px;font-size:11px;font-weight:bold;color:#222">Evaluation Rules &gt;&gt;</div>

<!-- table -->
<div class="a" style="left:983px;top:374px;width:466px;height:259px;background:#fff;border:1px solid #a8acb0;border-bottom:none"></div>


<svg class="a" style="left:983px;top:374px" width="467" height="259" viewBox="983 374 467 259">
 <defs><linearGradient id="th" x1="0" y1="0" x2="0" y2="1"><stop offset="0" stop-color="#fbfbfc"/><stop offset="1" stop-color="#eceef0"/></linearGradient></defs>
 <rect x="984" y="375" width="464" height="21" fill="url(#th)"/>
 <rect x="984" y="396" width="464" height="21" fill="#e8f8de"/>
 <rect x="1273" y="396" width="17" height="65" fill="#f5f6f9"/>
 <path d="M984 395.5 H1448" stroke="#cfd1d4"/>
 <path d="M984 417 H1448 M984 439 H1448 M984 461 H1448" stroke="#e6e8eb"/>
 <path d="M1034.5 375 V461 M1128.5 375 V461 M1178.5 375 V461 M1272.5 375 V461 M1289.5 375 V461 M1383.5 375 V461 M1433.5 375 V461" stroke="#e4e6e9"/>
 
 <g font-family="Liberation Sans" font-weight="bold" font-size="11" fill="#333">
  <text x="991" y="391">Tag</text><text x="1040.5" y="391">Reference</text><text x="1134.5" y="391">Status</text><text x="1184.5" y="391">Rule</text>
  <text x="1278.5" y="391">.</text><text x="1295.5" y="391">Reference</text><text x="1389.5" y="391">Status</text><text x="1438" y="391">R</text>
 </g>
 <g font-family="Liberation Sans" font-size="11" fill="#333">
  <text x="987.5" y="411">TAG_0</text><text x="1037.5" y="411">(id 260) Surf:F9...</text><text x="1181.5" y="411">Manual</text>
  <text x="987.5" y="433">TAG_1</text><text x="1037.5" y="433">(id 411) Surf:F1...</text><text x="1181.5" y="433">Manual</text>
  <text x="987.5" y="455">TAG_2</text><text x="1037.5" y="455">(id 63) Surf:F6(...</text><text x="1181.5" y="455">Manual</text>
 </g>
 <g id="lk"><path d="M1136.8 405.5 V403 Q1136.8 400.2 1140 400.2 Q1143.2 400.2 1143.2 403 V405.5" fill="none" stroke="#454545" stroke-width="2"/><rect x="1134" y="405" width="12" height="9" fill="#454545"/></g>
 <use href="#lk" y="22"/><use href="#lk" y="44"/>
 <path id="pl" d="M1395.2 400 H1398.8 V405.2 H1404 V408.8 H1398.8 V414 H1395.2 V408.8 H1390 V405.2 H1395.2 Z" fill="#454545"/>
 <use href="#pl" y="22"/><use href="#pl" y="44"/>
 <g font-family="Liberation Sans" font-size="11" fill="#333">
  <text x="1436.5" y="411">Ma</text><text x="1436.5" y="433">Ma</text><text x="1436.5" y="455">Ma</text>
 </g>
 <rect x="1448" y="375" width="2" height="258" fill="#eef0f2"/>
</svg>

<svg class="a" style="left:1440px;top:170px" width="200" height="420" viewBox="1440 170 200 420">
 <defs><filter id="ash" x="-50%" y="-10%" width="200%" height="120%"><feGaussianBlur stdDeviation="2.2"/></filter></defs>
 <g transform="translate(4,3)" filter="url(#ash)" opacity="0.5">
  <path d="M1584.0 184.5 L1501.0 443.6 M1521.0 568.5 L1535.7 502.7" stroke="#333" stroke-width="3.2" fill="none"/>
  <path d="M1497.0 456.0 L1494.4 439.4 L1501.0 443.6 L1508.7 444.0 Z M1538.5 490.0 L1542.6 506.3 L1535.7 502.7 L1527.9 503.0 Z" fill="#333"/>
 </g>
 <path d="M1584.0 184.5 L1501.0 443.6 M1521.0 568.5 L1535.7 502.7" stroke="#c90b16" stroke-width="3.2" fill="none"/>
 <path d="M1497.0 456.0 L1494.4 439.4 L1501.0 443.6 L1508.7 444.0 Z M1538.5 490.0 L1542.6 506.3 L1535.7 502.7 L1527.9 503.0 Z" fill="#c90b16"/>
</svg>

<div class="a" style="left:985px;top:396px;width:49px;height:21px;border:1px dotted #222"></div>
<!-- big ellipse -->
<svg class="a" style="left:960px;top:370px" width="510" height="130" viewBox="960 370 510 130">
 <defs><filter id="sh2" x="-10%" y="-30%" width="120%" height="160%"><feGaussianBlur stdDeviation="2.5"/></filter></defs>
 <ellipse cx="1222" cy="436.5" rx="237" ry="51" fill="none" stroke="rgba(50,50,40,0.5)" stroke-width="3" filter="url(#sh2)"/>
 <ellipse cx="1219" cy="432.5" rx="237.8" ry="51.5" fill="none" stroke="#17841a" stroke-width="2.3"/>
</svg>

</body></html>
